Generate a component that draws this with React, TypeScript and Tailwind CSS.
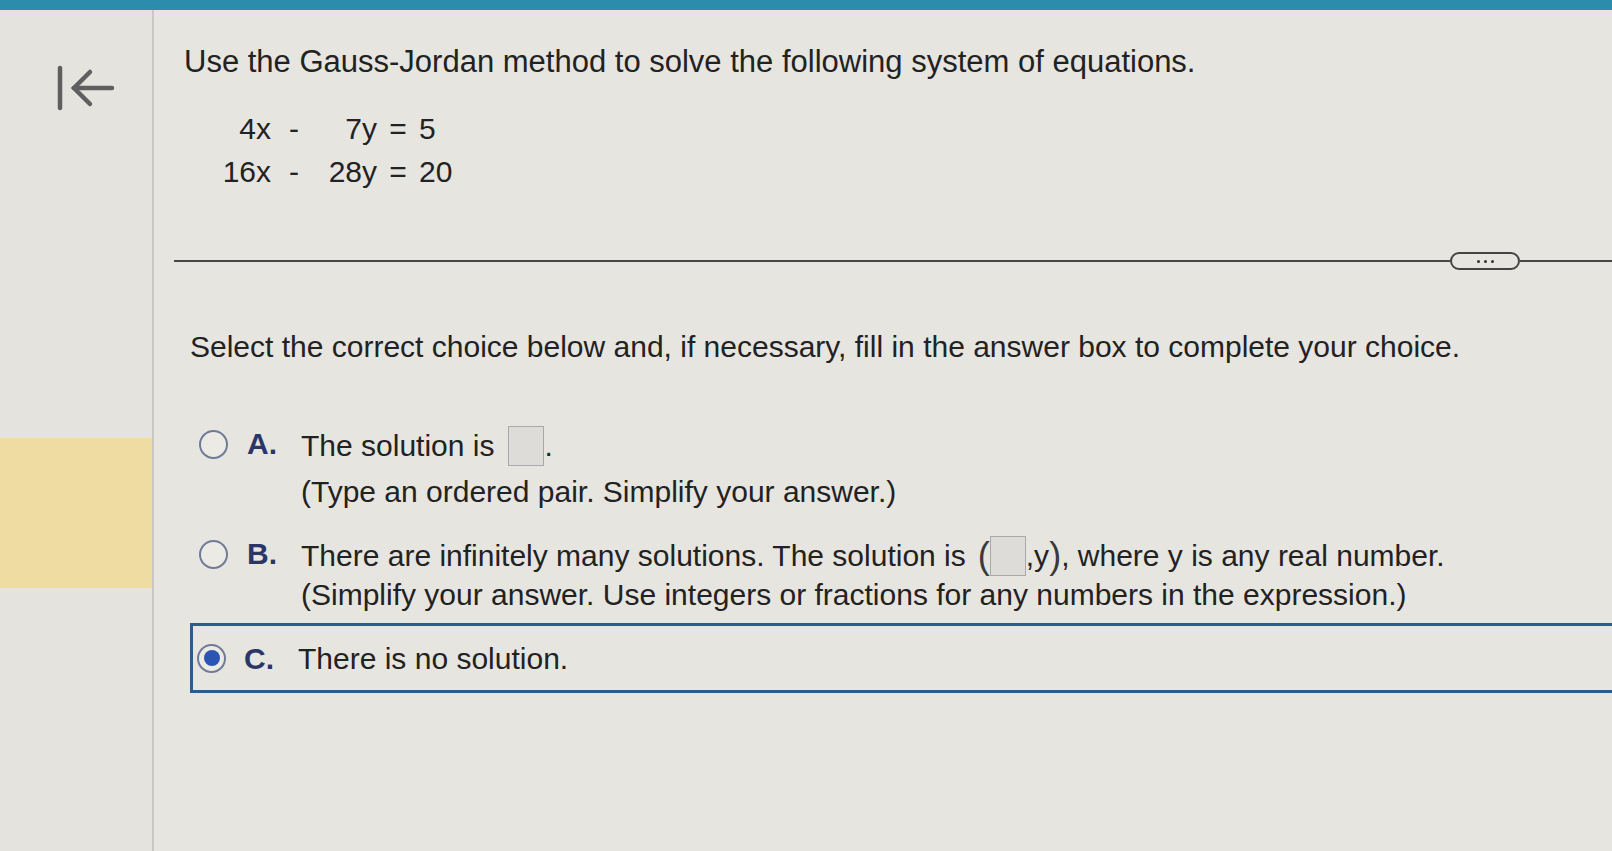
import { useState } from "react"

type Choice = "A" | "B" | "C"

function Radio({ checked }: { checked: boolean }) {
  return (
    <span className="flex h-[29px] w-[29px] shrink-0 items-center justify-center rounded-full border-[2px] border-[#6f7c98] bg-[#eceae5]">
      {checked && <span className="h-[16px] w-[16px] rounded-full bg-[#2a55b0]" />}
    </span>
  )
}

function AnswerBox() {
  return <span className="inline-block h-[40px] w-[36px] border border-[#a9a9a9] bg-[#dedcd8] align-middle" />
}

export default function App() {
  const [choice, setChoice] = useState<Choice>("C")

  return (
    <div
      className="flex h-[851px] w-[1612px] flex-col overflow-hidden bg-[#e7e5e0] text-[#222222]"
      style={{ fontFamily: '"Liberation Sans", Arial, sans-serif' }}
    >
      <div className="h-[10px] bg-[#2b8cab]" />

      <div className="flex flex-1">
        {/* sidebar */}
        <div className="flex w-[154px] shrink-0 flex-col border-r-[2px] border-[#c9c8c4] bg-[#e5e3de]">
          <div className="flex h-[102px] items-end pl-[56px]">
            <svg width="60" height="48" viewBox="0 0 60 48" fill="none" stroke="#5f5f60" strokeWidth="4.5" strokeLinecap="round">
              <path d="M4 4 V44" />
              <path d="M18 24 H56" />
              <path d="M34 8 L18 24 L34 40" />
            </svg>
          </div>
          <div className="mt-[326px] h-[150px] bg-[#eedca3]" />
        </div>

        {/* main */}
        <div className="flex flex-1 flex-col pl-[30px] pt-[35px]">
          <div className="text-[31px] leading-[34px]">Use the Gauss-Jordan method to solve the following system of equations.</div>

          <table className="mt-[28px] ml-[30px] text-[30px] leading-[43px]">
            <tbody>
              <tr>
                <td className="w-[57px] text-right">4x</td>
                <td className="w-[46px] text-center">-</td>
                <td className="w-[60px] text-right">7y</td>
                <td className="w-[42px] text-center">=</td>
                <td>5</td>
              </tr>
              <tr>
                <td className="text-right">16x</td>
                <td className="text-center">-</td>
                <td className="text-right">28y</td>
                <td className="text-center">=</td>
                <td>20</td>
              </tr>
            </tbody>
          </table>

          <div className="mt-[59px] flex items-center">
            <div className="ml-[-10px] h-[2px] flex-1 bg-[#474747]" />
            <div className="flex h-[18px] w-[70px] items-center justify-center gap-[4px] rounded-full border-[2px] border-[#444444] bg-[#e7e5e0]">
              <span className="h-[3px] w-[3px] rounded-full bg-[#333333]" />
              <span className="h-[3px] w-[3px] rounded-full bg-[#333333]" />
              <span className="h-[3px] w-[3px] rounded-full bg-[#333333]" />
            </div>
            <div className="h-[2px] w-[92px] bg-[#474747]" />
          </div>

          <div className="mt-[60px] pl-[6px] text-[30px] leading-[34px]">
            Select the correct choice below and, if necessary, fill in the answer box to complete your choice.
          </div>

          <div className="mt-[62px] flex flex-col pl-[12px] text-[30px]">
            {/* A */}
            <button className="flex items-start text-left" onClick={() => setChoice("A")}>
              <span className="mt-[4px] ml-[3px]">
                <Radio checked={choice === "A"} />
              </span>
              <span className="ml-[19px] w-[54px] font-bold leading-[36px] text-[#2c3568]">A.</span>
              <span className="flex flex-col">
                <span className="flex items-center leading-[36px]">
                  The solution is <span className="ml-[14px]"><AnswerBox /></span>.
                </span>
                <span className="mt-[8px] leading-[36px]">(Type an ordered pair. Simplify your answer.)</span>
              </span>
            </button>

            {/* B */}
            <button className="mt-[26px] flex items-start text-left" onClick={() => setChoice("B")}>
              <span className="mt-[4px] ml-[3px]">
                <Radio checked={choice === "B"} />
              </span>
              <span className="ml-[19px] w-[54px] font-bold leading-[36px] text-[#2c3568]">B.</span>
              <span className="flex flex-col">
                <span className="flex items-center leading-[36px]">
                  There are infinitely many solutions. The solution is
                  <span className="ml-[12px] text-[36px] font-light text-[#3a3a3a]">(</span>
                  <AnswerBox />
                  <span>,y</span>
                  <span className="text-[36px] font-light text-[#3a3a3a]">)</span>
                  <span>, where y is any real number.</span>
                </span>
                <span className="mt-[1px] leading-[36px]">
                  (Simplify your answer. Use integers or fractions for any numbers in the expression.)
                </span>
              </span>
            </button>

            {/* C */}
            <button
              className="mt-[10px] ml-[-6px] flex h-[70px] items-center border-[3px] border-r-0 border-[#2f5b8c] text-left"
              onClick={() => setChoice("C")}
            >
              <span className="ml-[4px]">
                <Radio checked={choice === "C"} />
              </span>
              <span className="ml-[18px] w-[54px] font-bold text-[#2c3568]">C.</span>
              <span>There is no solution.</span>
            </button>
          </div>
        </div>
      </div>
    </div>
  )
}
